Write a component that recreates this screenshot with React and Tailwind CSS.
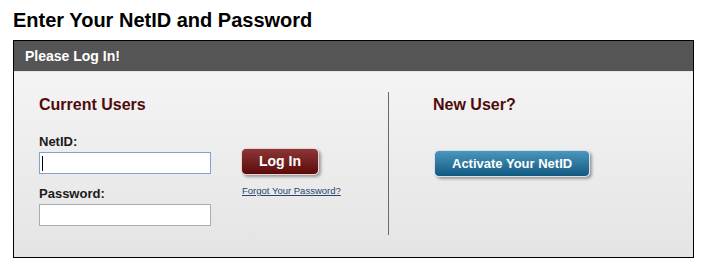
import React from "react";

export default function App() {
  const font = { fontFamily: '"Liberation Sans", Arial, sans-serif' };
  return (
    <div className="w-[717px] h-[269px] bg-white pl-[13px] pt-[8px]" style={font}>
      <h1 className="text-[20px] leading-[24px] font-bold text-black">Enter Your NetID and Password</h1>
      <div className="mt-[8px] w-[681px] border border-black">
        <div className="h-[30px] bg-[#555555] pl-[11px] text-[14px] leading-[30px] font-bold text-white">
          Please Log In!
        </div>
        <div className="flex h-[186px] pt-[20px] pb-[22px] bg-gradient-to-b from-[#f4f4f4] to-[#e4e4e4] border-t border-[#e8e8e8]">
          <div className="w-[374px] pl-[25px]">
            <h2 className="mt-[3px] text-[16px] leading-[20px] font-bold text-[#4f0b0b]">Current Users</h2>
            <div className="mt-[19px] flex">
              <div className="w-[172px]">
                <div className="text-[13px] leading-[16px] font-bold text-[#1a1a1a]">NetID:</div>
                <div className="mt-[2px] h-[22px] w-[172px] border border-[#7ea3d1] bg-white flex items-center pl-[2px]">
                  <span className="block w-[1px] h-[15px] bg-black"></span>
                </div>
                <div className="mt-[12px] text-[13px] leading-[16px] font-bold text-[#1a1a1a]">Password:</div>
                <div className="mt-[2px] h-[22px] w-[172px] border border-[#acacac] bg-white"></div>
              </div>
              <div className="ml-[30px] mt-[14px] flex flex-col items-start">
                <button className="h-[27px] px-[17px] rounded-[5px] border border-[#e6d6d6] bg-gradient-to-b from-[#8d3636] to-[#5a0909] text-white text-[14px] leading-[25px] font-bold shadow-[2px_2px_3px_rgba(0,0,0,0.35)]">
                  Log In
                </button>
                <a className="mt-[10px] ml-[1px] text-[9.5px] leading-[12px] text-[#26466e] underline" href="#">
                  Forgot Your Password?
                </a>
              </div>
            </div>
          </div>
          <div className="w-px bg-[#6a6a6a]"></div>
          <div className="pl-[44px]">
            <h2 className="mt-[3px] text-[16px] leading-[20px] font-bold text-[#4f0b0b]">New User?</h2>
            <button className="mt-[35px] ml-[1px] h-[27px] px-[17px] rounded-[5px] border border-[#d6e3ea] bg-gradient-to-b from-[#4b97be] to-[#0e5981] text-white text-[13px] leading-[25px] font-bold shadow-[2px_2px_3px_rgba(0,0,0,0.35)]">
              Activate Your NetID
            </button>
          </div>
        </div>
      </div>
    </div>
  );
}
